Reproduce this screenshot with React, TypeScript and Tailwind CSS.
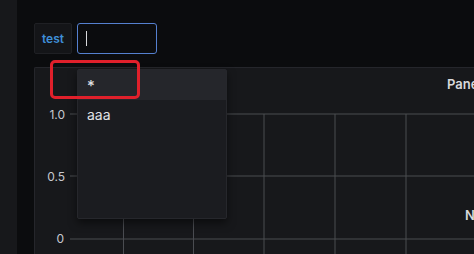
import React from "react";

const gridX = [88.5, 158.5, 229, 300, 371, 442];
const gridY = [13, 75, 138];

export default function App() {
  return (
    <div
      className="relative flex h-[254px] w-[474px] overflow-hidden bg-[#0b0c0e]"
      style={{ fontFamily: "Inter, 'Noto Sans', sans-serif" }}
    >
      <div className="w-[17px] shrink-0 bg-[#17181b]" />
      <div className="flex flex-1 flex-col bg-[#0b0c0e] pl-[17px] pt-[23px]">
        <div className="flex gap-[5px]">
          <div className="flex h-[31px] w-[38px] items-center justify-center rounded-[2px] border border-[#1f2024] bg-[#141518] text-[12px] font-semibold text-[#3f8fd8]">
            test
          </div>
          <div className="flex h-[31px] w-[80px] items-center rounded-[3px] border border-[#5580cf] bg-[#0b0c0e] pl-[8px]">
            <div className="h-[15px] w-px bg-[#d8d9dc]" />
          </div>
        </div>
        <div className="mt-[13px] flex flex-1 flex-col rounded-tl-[2px] border-l border-t border-[#25262b] bg-[#17181b]">
          <div className="h-[33px] pl-[412px] pt-[8px] text-[13px] font-semibold leading-[16px] text-[#d8d9dc] whitespace-nowrap">
            Panel Title
          </div>
          <svg width="440" height="154" className="block">
            {gridY.map((y) => (
              <line key={y} x1="35" x2="440" y1={y} y2={y} stroke="#4a4c51" strokeWidth="1" />
            ))}
            {gridX.map((x) => (
              <line key={x} x1={x} x2={x} y1="13" y2="154" stroke="#4a4c51" strokeWidth="1" />
            ))}
            <g fill="#c7c8cf" fontSize="12" textAnchor="end" fontFamily="Inter, sans-serif">
              <text x="30" y="17.5">1.0</text>
              <text x="30" y="79.5">0.5</text>
              <text x="29" y="141.5">0</text>
            </g>
            <text x="430" y="119" fill="#d8d9dc" fontSize="13" fontWeight="600" fontFamily="Inter, sans-serif">
              No data
            </text>
          </svg>
        </div>
      </div>

      <div className="absolute left-[77px] top-[69px] flex h-[150px] w-[150px] flex-col rounded-[2px] border border-[#26272c] bg-[#1b1c20] shadow-[0_4px_8px_rgba(0,0,0,0.5)]">
        <div className="flex h-[30px] items-center bg-[#25262b] pl-[9px] pt-[3px] text-[15px] font-medium text-[#e0e1e4]">*</div>
        <div className="flex h-[28px] items-center pl-[9px] text-[14px] text-[#e0e1e4]">aaa</div>
      </div>

      <div className="absolute left-[50px] top-[60px] h-[39px] w-[90px] rounded-[5px] border-[3px] border-[#e0202b]" />
    </div>
  );
}
